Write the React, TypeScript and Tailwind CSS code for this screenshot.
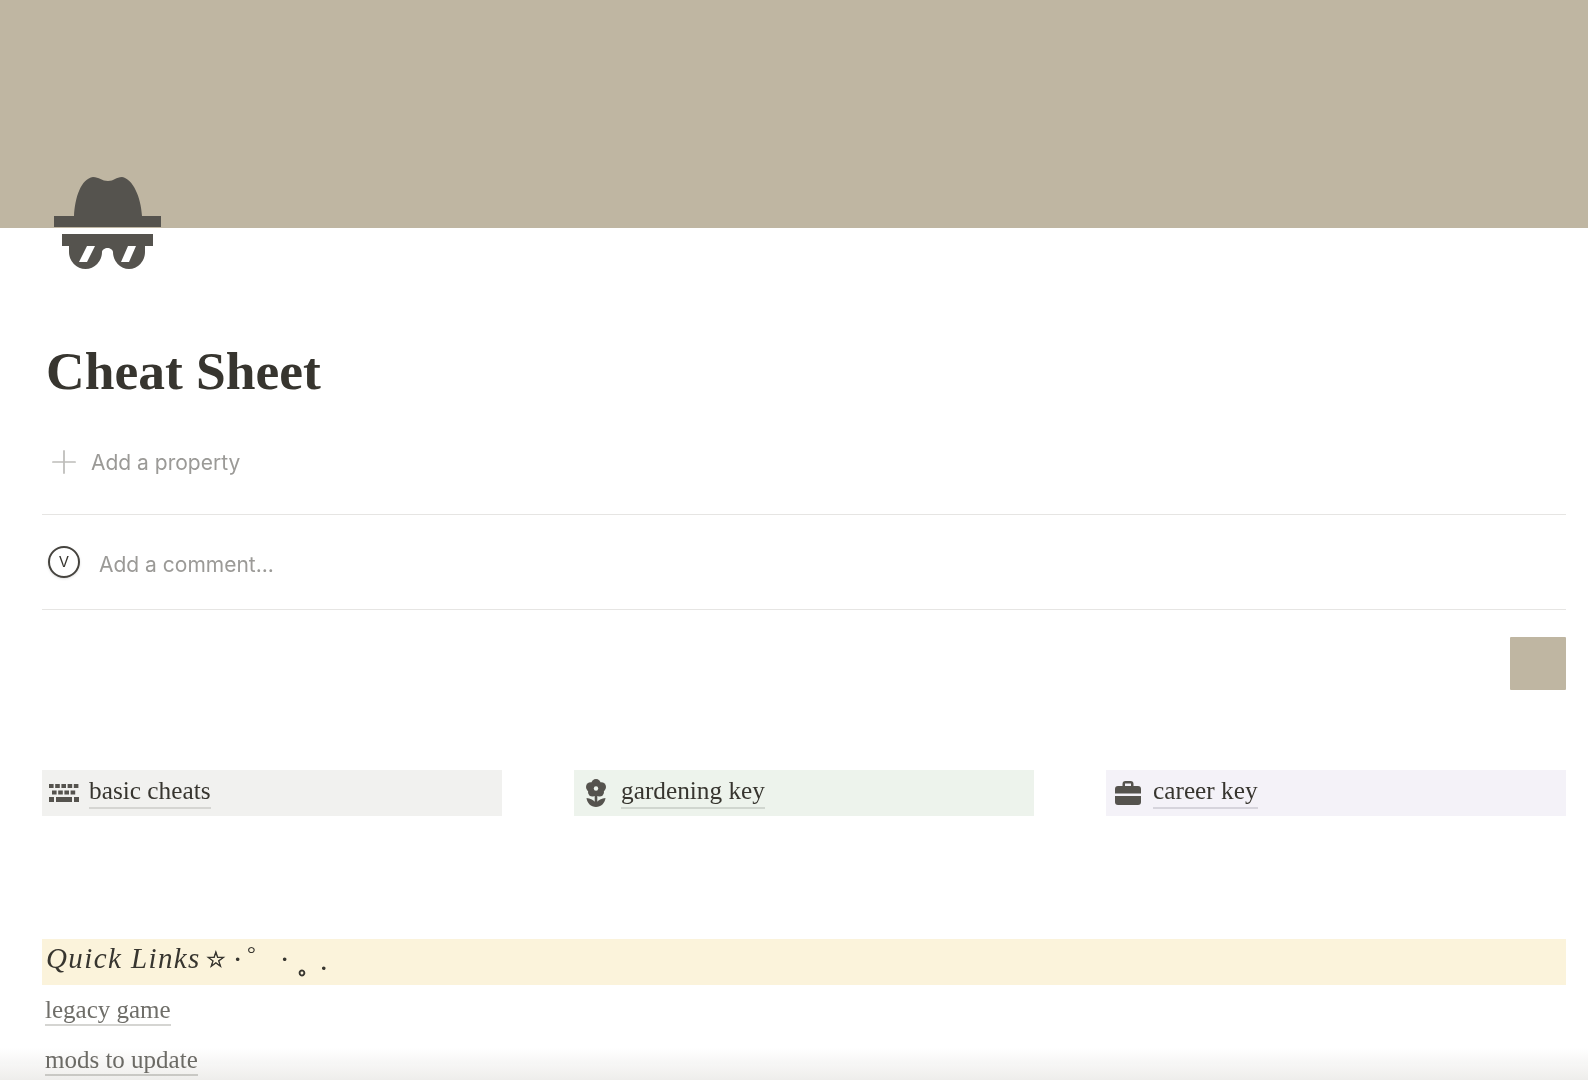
import { Plus } from 'lucide-react';

const serif = "font-['Liberation_Serif',serif]";
const sans = "font-['Inter',sans-serif]";

function HatIcon() {
  return (
    <svg viewBox="0 0 107 92" className="w-[107px] h-[92px] fill-[#55534e]">
      <path d="M20 39 C21 20 27 2 39 0 C45 0 48 4 54 4 C60 4 62 0 68 0 C79 2 87 20 88 39 Z" />
      <rect x="0" y="39" width="107" height="11" />
      <path
        fillRule="evenodd"
        d="M8 57 H99 V69 H91 V75 A16 17 0 0 1 59 75 C59 73 56 71 53.5 71 C51 71 48 73 48 75 A16.5 17 0 0 1 15 75 V69 H8 Z M33 69 L25 85 H33 L41 69 Z M74 69 L67 85 H75 L82 69 Z"
      />
    </svg>
  );
}

function KeyboardIcon() {
  const top = [0, 6.2, 12.4, 18.6, 24.8];
  return (
    <svg viewBox="0 0 30 18" className="w-[30px] h-[18px] fill-[#55534e]">
      {top.map((x) => (
        <rect key={x} x={x} y="0" width="4.6" height="4" />
      ))}
      {top.slice(0, 4).map((x) => (
        <rect key={x} x={x + 3} y="6.5" width="4.6" height="4" />
      ))}
      <rect x="0" y="13" width="5" height="5" />
      <rect x="7" y="13" width="16" height="5" />
      <rect x="25" y="13" width="5" height="5" />
    </svg>
  );
}

function FlowerIcon() {
  return (
    <svg viewBox="0 0 20 28" className="w-[20px] h-[28px] fill-[#55534e]">
      <circle cx="10" cy="4.8" r="4.8" />
      <circle cx="4.8" cy="8" r="4.8" />
      <circle cx="15.2" cy="8" r="4.8" />
      <circle cx="6.5" cy="13" r="4.5" />
      <circle cx="13.5" cy="13" r="4.5" />
      <circle cx="10" cy="9.5" r="2.2" className="fill-[#edf3ec]" />
      <rect x="8.7" y="16" width="2.6" height="8" />
      <path d="M0.5 19 C4 19.5 8 21 10 24 C12 21 16 19.5 19.5 19 C19 24 15 28 10 28 C5 28 1 24 0.5 19 Z" />
    </svg>
  );
}

function BriefcaseIcon() {
  return (
    <svg viewBox="0 0 26 24" className="w-[26px] h-[24px] fill-[#55534e]">
      <path
        fillRule="evenodd"
        d="M7.5 5 V3 C7.5 1 8.5 0 10.5 0 H15.5 C17.5 0 18.5 1 18.5 3 V5 H23 C25 5 26 6 26 8 V12.5 H0 V8 C0 6 1 5 3 5 Z M10 2.5 V5 H16 V2.5 Z"
      />
      <path d="M0 15 H26 V21 C26 23 25 24 23 24 H3 C1 24 0 23 0 21 Z" />
    </svg>
  );
}

function Callout({ icon, label, bg, line }: { icon: React.ReactNode; label: string; bg: string; line: string }) {
  return (
    <div className={`flex-1 h-[46px] flex items-start ${bg}`}>
      <div className="w-[44px] h-[46px] flex items-center justify-center">{icon}</div>
      <span className={`ml-[3px] mt-[3px] text-[25.3px] leading-[34px] text-[#37352f] border-b-2 ${line} ${serif}`}>{label}</span>
    </div>
  );
}

export default function App() {
  return (
    <div className="relative h-[1080px] overflow-hidden bg-white">
      <div className="h-[228px] bg-[#bfb6a2]" />

      <div className="pl-[42px] pr-[22px]">
        <div className="-mt-[51px] ml-[12px]">
          <HatIcon />
        </div>

        <h1 className={`mt-[74px] ml-[4px] text-[53.5px] leading-[56px] font-bold text-[#37352f] ${serif}`}>Cheat Sheet</h1>

        <div className={`mt-[47px] h-[32px] flex items-center text-[21px] text-[#9b9a97] ${sans}`}>
          <Plus size={38} strokeWidth={1.1} className="ml-[3px] text-[#bdbcb9]" />
          <span className="ml-[8px] mt-[1px]">Add a property</span>
        </div>

        <div className="mt-[36px] border-t border-[#e6e5e3]" />

        <div className="h-[94px] flex items-center">
          <div
            className={`ml-[6px] w-[32px] h-[32px] rounded-full border-2 border-[#45433e] flex items-center justify-center text-[15px] text-[#37352f] shadow-sm ${sans}`}
          >
            V
          </div>
          <span className={`ml-[19px] mt-[6px] text-[21px] text-[#9b9a97] ${sans}`}>Add a comment...</span>
        </div>

        <div className="border-t border-[#e6e5e3]" />

        <div className="mt-[27px] flex justify-end">
          <div className="w-[56px] h-[53px] rounded-[1px] bg-[#bfb6a2]" />
        </div>

        <div className="mt-[80px] flex gap-[72px]">
          <Callout icon={<KeyboardIcon />} label="basic cheats" bg="bg-[#f1f1ef]" line="border-[#d5d5d2]" />
          <Callout icon={<FlowerIcon />} label="gardening key" bg="bg-[#edf3ec]" line="border-[#d0d6cf]" />
          <Callout icon={<BriefcaseIcon />} label="career key" bg="bg-[#f4f2f8]" line="border-[#d6d4dc]" />
        </div>

        <div className={`mt-[123px] h-[46px] flex items-center pl-[4px] pb-[6px] bg-[#fbf3db] text-[#37352f] text-[29px] italic ${serif}`}>
          <span className="w-[160px] tracking-[1.4px]">Quick Links</span>
          <span className="w-[28px] text-[22px] not-italic font-['DejaVu_Sans',sans-serif] [-webkit-text-stroke:0.7px_#37352f]">☆</span>
          <div className="flex items-center not-italic font-bold text-[22px] leading-none">
            <span className="w-[13px]">·</span>
            <span className="w-[34px] -translate-y-[5px] font-normal">°</span>
            <span className="w-[17px]">·</span>
            <span className="w-[23px] translate-y-[8px]">｡</span>
            <span className="translate-y-[4px]">.</span>
          </div>
        </div>

        <div className={`mt-[10px] ml-[3px] flex flex-col items-start gap-[19px] text-[25px] leading-[29px] text-[#6f6e69] ${serif}`}>
          <span className="border-b-2 border-[#d5d5d2]">legacy game</span>
          <span className="border-b-2 border-[#d5d5d2]">mods to update</span>
        </div>
      </div>

      <div className="absolute bottom-0 inset-x-0 h-[32px] bg-gradient-to-b from-transparent to-[#eeedeb] mix-blend-multiply" />
    </div>
  );
}
